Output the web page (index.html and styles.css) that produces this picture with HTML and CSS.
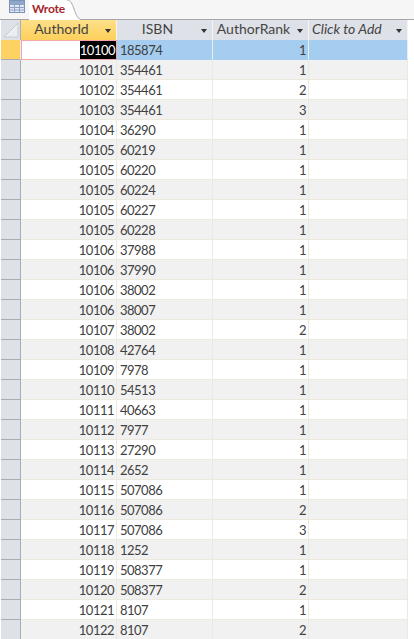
FILE: index.html
```html
<!DOCTYPE html>
<html lang="en">
<head>
<meta charset="utf-8">
<title>Wrote</title>
<link rel="stylesheet" href="styles.css">
</head>
<body>
<div class="tabbar">
  <svg class="tabicon" width="16" height="14" viewBox="0 0 16 14">
    <rect x="0.5" y="0.5" width="15" height="12" fill="#dfe8f5" stroke="#7f93b5"/>
    <rect x="1" y="1" width="14" height="3" fill="#8fa8d0"/>
    <path d="M5.500 1v11.500M10.500 1v11.500M1 4.500h14M1 7.500h14M1 10h14" stroke="#8ea3c4" fill="none"/>
  </svg>
  <div class="tab">
    <span class="tabname">Wrote</span>
    <svg class="tabcurve" width="14" height="20" viewBox="0 0 14 20">
      <path d="M0 0H1C5 0 6 4 8 9C10 14 11 18 14 19V20H0Z" fill="#fff"/>
      <path d="M1 0C5 0 6 4 8 9C10 14 11 18 14 19" fill="none" stroke="#a9a9a9"/>
    </svg>
  </div>
</div>
<table class="sheet">
  <colgroup>
    <col class="c-sel"><col class="c-data"><col class="c-data"><col class="c-data"><col class="c-add">
  </colgroup>
  <thead>
    <tr>
      <th class="corner"><svg class="cornermark" width="16" height="16" viewBox="0 0 16 16"><path d="M1 15L15 1V15Z" fill="#eceef2" stroke="#c6cbd3"/></svg></th>
      <th class="hd active"><span class="hdlabel">AuthorId</span><i class="arrow"></i></th>
      <th class="hd"><span class="hdlabel">ISBN</span><i class="arrow"></i></th>
      <th class="hd"><span class="hdlabel">AuthorRank</span><i class="arrow"></i></th>
      <th class="hd add"><span class="hdlabel">Click to Add</span><i class="arrow"></i></th>
    </tr>
  </thead>
  <tbody>
    <tr class="current"><td class="sel"></td><td class="num focus"><span class="picked">10100</span></td><td>185874</td><td class="num">1</td><td></td></tr>
    <tr><td class="sel"></td><td class="num">10101</td><td>354461</td><td class="num">1</td><td></td></tr>
    <tr><td class="sel"></td><td class="num">10102</td><td>354461</td><td class="num">2</td><td></td></tr>
    <tr><td class="sel"></td><td class="num">10103</td><td>354461</td><td class="num">3</td><td></td></tr>
    <tr><td class="sel"></td><td class="num">10104</td><td>36290</td><td class="num">1</td><td></td></tr>
    <tr><td class="sel"></td><td class="num">10105</td><td>60219</td><td class="num">1</td><td></td></tr>
    <tr><td class="sel"></td><td class="num">10105</td><td>60220</td><td class="num">1</td><td></td></tr>
    <tr><td class="sel"></td><td class="num">10105</td><td>60224</td><td class="num">1</td><td></td></tr>
    <tr><td class="sel"></td><td class="num">10105</td><td>60227</td><td class="num">1</td><td></td></tr>
    <tr><td class="sel"></td><td class="num">10105</td><td>60228</td><td class="num">1</td><td></td></tr>
    <tr><td class="sel"></td><td class="num">10106</td><td>37988</td><td class="num">1</td><td></td></tr>
    <tr><td class="sel"></td><td class="num">10106</td><td>37990</td><td class="num">1</td><td></td></tr>
    <tr><td class="sel"></td><td class="num">10106</td><td>38002</td><td class="num">1</td><td></td></tr>
    <tr><td class="sel"></td><td class="num">10106</td><td>38007</td><td class="num">1</td><td></td></tr>
    <tr><td class="sel"></td><td class="num">10107</td><td>38002</td><td class="num">2</td><td></td></tr>
    <tr><td class="sel"></td><td class="num">10108</td><td>42764</td><td class="num">1</td><td></td></tr>
    <tr><td class="sel"></td><td class="num">10109</td><td>7978</td><td class="num">1</td><td></td></tr>
    <tr><td class="sel"></td><td class="num">10110</td><td>54513</td><td class="num">1</td><td></td></tr>
    <tr><td class="sel"></td><td class="num">10111</td><td>40663</td><td class="num">1</td><td></td></tr>
    <tr><td class="sel"></td><td class="num">10112</td><td>7977</td><td class="num">1</td><td></td></tr>
    <tr><td class="sel"></td><td class="num">10113</td><td>27290</td><td class="num">1</td><td></td></tr>
    <tr><td class="sel"></td><td class="num">10114</td><td>2652</td><td class="num">1</td><td></td></tr>
    <tr><td class="sel"></td><td class="num">10115</td><td>507086</td><td class="num">1</td><td></td></tr>
    <tr><td class="sel"></td><td class="num">10116</td><td>507086</td><td class="num">2</td><td></td></tr>
    <tr><td class="sel"></td><td class="num">10117</td><td>507086</td><td class="num">3</td><td></td></tr>
    <tr><td class="sel"></td><td class="num">10118</td><td>1252</td><td class="num">1</td><td></td></tr>
    <tr><td class="sel"></td><td class="num">10119</td><td>508377</td><td class="num">1</td><td></td></tr>
    <tr><td class="sel"></td><td class="num">10120</td><td>508377</td><td class="num">2</td><td></td></tr>
    <tr><td class="sel"></td><td class="num">10121</td><td>8107</td><td class="num">1</td><td></td></tr>
    <tr><td class="sel"></td><td class="num">10122</td><td>8107</td><td class="num">2</td><td></td></tr>
  </tbody>
</table>
</body>
</html>
```
FILE: styles.css
```css
html, body {
  margin: 0;
  padding: 0;
  height: 100%;
  overflow: hidden;
  background: #fff;
}
body {
  font-family: Lato, "Open Sans", sans-serif;
  font-size: 13px;
  color: #3f3f3f;
}
.tabbar {
  display: flex;
  align-items: flex-start;
  height: 19px;
  background: #f6f6f6;
  border-bottom: 1px solid #a6a6a6;
  padding-left: 2px;
}
.tabicon {
  margin: 0 0 0 7px;
  flex: none;
}
.tab {
  display: flex;
  height: 20px;
  margin-left: 4px;
  background: #fff;
}
.tabname {
  padding-left: 3px;
  width: 34px;
  color: #a4262c;
  font-size: 12px;
  font-weight: 700;
  letter-spacing: -0.2px;
  line-height: 18px;
}
.tabcurve {
  flex: none;
  background: #f6f6f6;
}
.sheet {
  table-layout: fixed;
  border-collapse: separate;
  border-spacing: 0;
  width: 407px;
  margin-left: 1px;
}
.c-sel { width: 20px; }
.c-data { width: 96px; }
.c-add { width: 99px; }
th, td {
  height: 20px;
  padding: 0;
  box-sizing: border-box;
  overflow: hidden;
  white-space: nowrap;
}
th {
  position: relative;
  background: #dee1e7;
  border-right: 1px solid #f4f4f4;
  font-weight: 400;
  font-size: 14px;
  text-align: left;
  vertical-align: top;
}
.corner {
  background: #dee1e7;
  border-right: 1px solid #a9adb4;
}
.cornermark {
  display: block;
  margin: 2px 0 0 2px;
}
.hd .hdlabel {
  display: block;
  text-align: center;
  padding-right: 14px;
  line-height: 18px;
  color: #444;
}
.hd.add .hdlabel {
  text-align: left;
  padding-left: 3px;
  font-style: italic;
}
.hd.active {
  background: linear-gradient(#fde089, #fdd05a);
}
.arrow {
  position: absolute;
  right: 5px;
  top: 9px;
  width: 0;
  height: 0;
  border-left: 3.5px solid transparent;
  border-right: 3.5px solid transparent;
  border-top: 4px solid #333;
}
td {
  border-right: 1px solid #ece9dd;
  border-bottom: 1px solid #ece9dd;
  padding: 2px 2px 0 3px;
  font-size: 13px;
  letter-spacing: -0.5px;
  line-height: 17px;
  color: #404040;
  vertical-align: top;
}
tbody tr:nth-child(even) td {
  background: #f1f1f1;
}
td.num {
  text-align: right;
}
td.sel,
tbody tr:nth-child(even) td.sel {
  background: #dee1e7;
  border-right: 1px solid #a9adb4;
  border-bottom: 1px solid #a9adb4;
  padding: 0;
}
tbody tr.current td {
  background: #a4cdf0;
  border-bottom-color: #a4cdf0;
  border-right-color: #e9eef3;
}
tbody tr.current td.sel {
  background: #fdd262;
  border-bottom-color: #a9adb4;
}
tbody tr.current td.focus {
  background: #fff;
  border: 1px solid #f4a6ab;
  padding: 0;
  line-height: 18px;
}
.picked {
  display: block;
  width: fit-content;
  margin-left: auto;
  background: #000;
  color: #fff;
  height: 18px;
  padding-right: 1px;
}
```
